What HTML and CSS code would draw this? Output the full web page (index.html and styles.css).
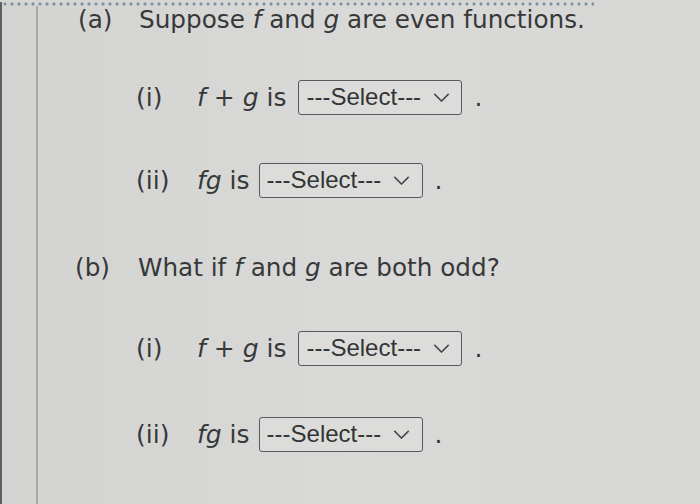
FILE: index.html
```html
<!DOCTYPE html>
<html>
<head>
<meta charset="utf-8">
<link rel="stylesheet" href="styles.css">
</head>
<body>
<div class="screen">
  <div class="rule"></div>
  <div class="content">
    <div class="row part">
      <span class="plabel">(a)</span>
      <span>Suppose <i>f</i> and <i>g</i> are even functions.</span>
    </div>
    <div class="row sub r1">
      <span class="slabel">(i)</span>
      <span class="expr"><i>f</i> + <i>g</i> is</span>
      <span class="select">---Select---<svg class="chev" viewBox="0 0 18 10"><path d="M1 1 L9 9 L17 1" /></svg></span>
      <span class="dot">.</span>
    </div>
    <div class="row sub r2">
      <span class="slabel">(ii)</span>
      <span class="expr e2"><i>fg</i> is</span>
      <span class="select">---Select---<svg class="chev" viewBox="0 0 18 10"><path d="M1 1 L9 9 L17 1" /></svg></span>
      <span class="dot">.</span>
    </div>
    <div class="row part pb">
      <span class="plabel lb">(b)</span>
      <span>What if <i>f</i> and <i>g</i> are both odd?</span>
    </div>
    <div class="row sub r3">
      <span class="slabel">(i)</span>
      <span class="expr"><i>f</i> + <i>g</i> is</span>
      <span class="select">---Select---<svg class="chev" viewBox="0 0 18 10"><path d="M1 1 L9 9 L17 1" /></svg></span>
      <span class="dot">.</span>
    </div>
    <div class="row sub r4">
      <span class="slabel">(ii)</span>
      <span class="expr e2"><i>fg</i> is</span>
      <span class="select">---Select---<svg class="chev" viewBox="0 0 18 10"><path d="M1 1 L9 9 L17 1" /></svg></span>
      <span class="dot">.</span>
    </div>
  </div>
</div>
</body>
</html>
```

FILE: styles.css
```css
html, body {
  margin: 0;
  padding: 0;
}
body {
  width: 700px;
  height: 504px;
  overflow: hidden;
  background: #d6d7d4;
}
.screen {
  height: 504px;
  border-left: 2px solid #5d5f5e;
  background: linear-gradient(90deg, #d3d4d1 0%, #d9dad7 50%, #d7d8d5 100%);
  font-family: "DejaVu Sans", Verdana, sans-serif;
  color: #37383a;
}
.rule {
  width: 592px;
  height: 4px;
  margin-top: 2px;
  background-image: radial-gradient(circle at 3px 2px, #7f8ea3 1.3px, transparent 1.8px);
  background-size: 7px 4px;
  background-repeat: repeat-x;
}
.content {
  margin-left: 34px;
  border-left: 2px solid #a9aaa8;
  height: 498px;
  padding-left: 40px;
}
.row {
  display: flex;
  align-items: center;
  height: 36px;
  white-space: nowrap;
}
.part {
  font-size: 24.7px;
  height: 26px;
}
.plabel {
  width: 61px;
}
.pb {
  margin-top: 56px;
}
.lb {
  margin-left: -3px;
  width: 63px;
}
.sub {
  font-size: 25px;
  padding-left: 58px;
}
.r1 { margin-top: 47px; }
.r2 { margin-top: 47px; }
.r3 { margin-top: 50px; }
.r4 { margin-top: 50px; }
.slabel {
  width: 61px;
}
.expr {
  margin-right: 12px;
}
.e2 {
  margin-right: 9px;
}
.select {
  display: flex;
  align-items: center;
  box-sizing: border-box;
  height: 35px;
  width: 164px;
  padding-left: 7px;
  border: 1.5px solid #58595a;
  border-radius: 3px;
  background: #dcddda;
  font-family: "Liberation Sans", Arial, sans-serif;
  font-size: 24px;
  color: #333435;
}
.chev {
  width: 17px;
  height: 9px;
  margin-left: 12px;
  fill: none;
  stroke: #47484a;
  stroke-width: 1.7;
}
.dot {
  margin-left: 12px;
}
```
